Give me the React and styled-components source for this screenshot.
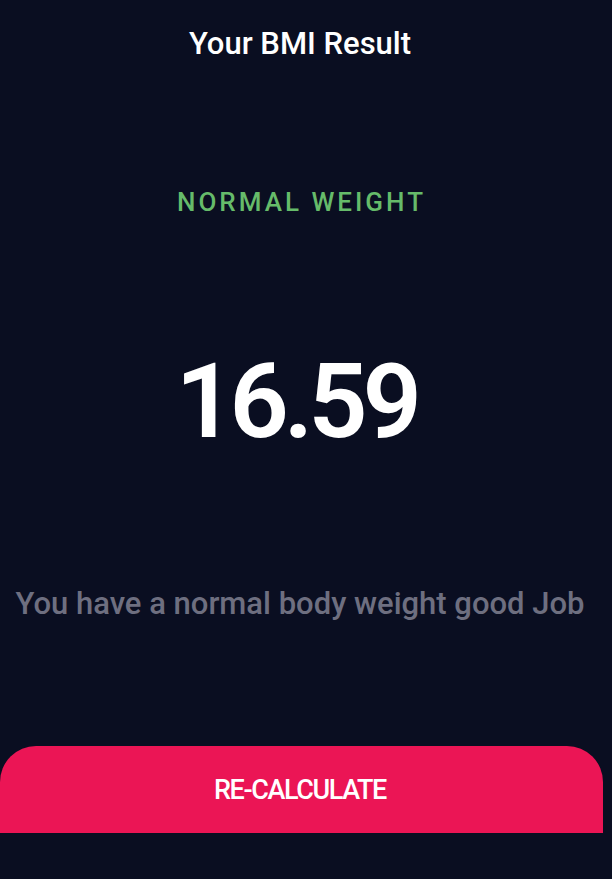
import React from "react";
import styled, { createGlobalStyle } from "styled-components";

const Global = createGlobalStyle`
  html, body {
    margin: 0;
    padding: 0;
    background: #0a0e21;
  }
  body {
    font-family: Roboto, "Liberation Sans", sans-serif;
  }
`;

const Screen = styled.div`
  box-sizing: border-box;
  width: 612px;
  height: 879px;
  background: #0a0e21;
  display: flex;
  flex-direction: column;
  overflow: hidden;
`;

const Content = styled.div`
  width: 600px;
  display: flex;
  flex-direction: column;
  align-items: center;
`;

const Title = styled.div`
  margin-top: 26px;
  height: 36px;
  line-height: 36px;
  font-size: 31px;
  font-weight: 500;
  color: #ffffff;
`;

const Status = styled.div`
  margin-top: 122px;
  padding-left: 3px;
  height: 36px;
  line-height: 36px;
  font-size: 26px;
  font-weight: 500;
  letter-spacing: 3px;
  color: ${(props) => props.color};
`;

const Value = styled.div`
  margin-top: 122px;
  padding-right: 8px;
  height: 120px;
  line-height: 120px;
  font-size: 104px;
  font-weight: 600;
  letter-spacing: -5.2px;
  color: #ffffff;
`;

const Message = styled.div`
  margin-top: 124px;
  height: 36px;
  line-height: 36px;
  font-size: 31px;
  font-weight: 500;
  color: #6e6f80;
  white-space: nowrap;
`;

const Button = styled.button`
  margin-top: 124px;
  width: 603px;
  height: 87px;
  padding: 0 3px 0 0;
  border: none;
  border-radius: 36px 36px 0 0;
  background: #eb1555;
  color: #ffffff;
  font-family: Roboto, "Liberation Sans", sans-serif;
  font-size: 27px;
  font-weight: 500;
  letter-spacing: -1.4px;
  cursor: pointer;
`;

function App() {
  return (
    <>
      <Global />
      <Screen>
        <Content>
          <Title>Your BMI Result</Title>
          <Status color="#66bb6a">NORMAL WEIGHT</Status>
          <Value>16.59</Value>
          <Message>You have a normal body weight good Job</Message>
        </Content>
        <Button>RE-CALCULATE</Button>
      </Screen>
    </>
  );
}

export default App;
